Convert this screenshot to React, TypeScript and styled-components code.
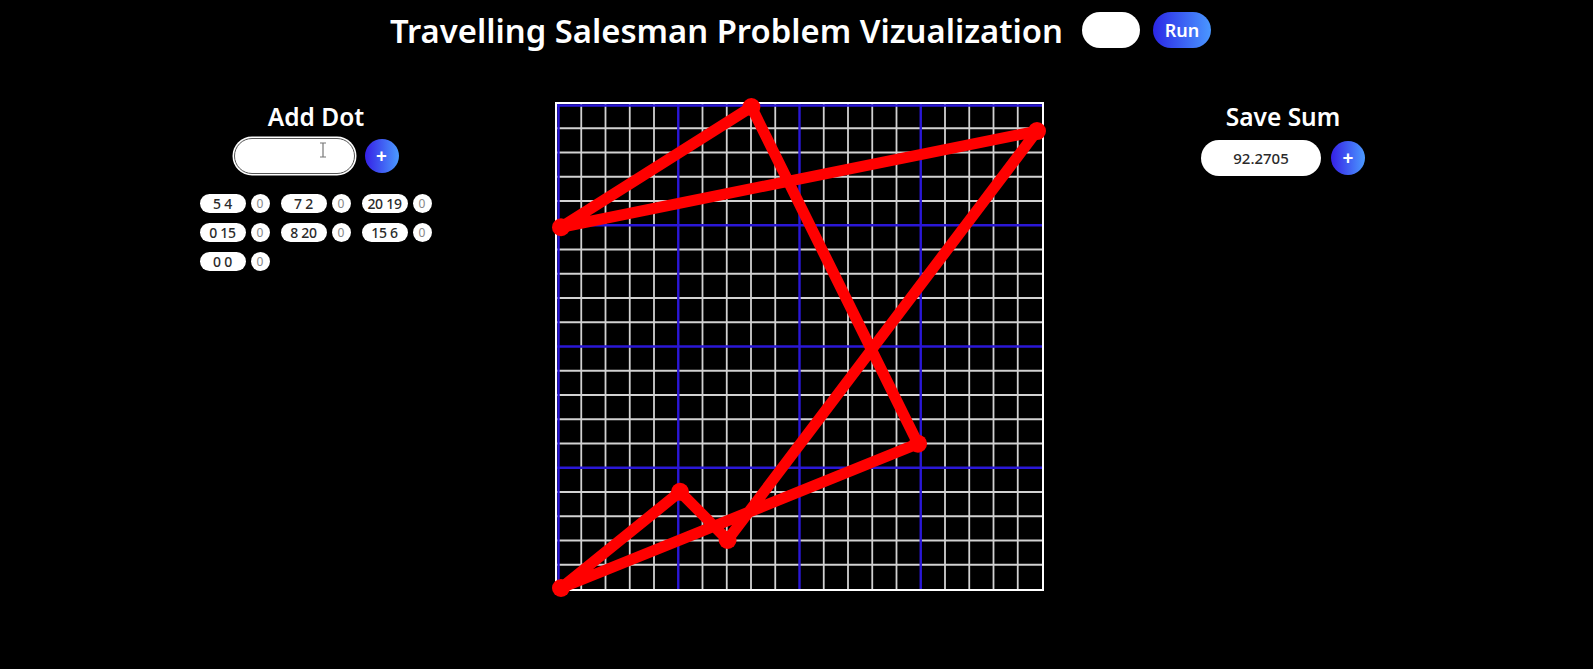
import React from "react";
import styled, { createGlobalStyle } from "styled-components";

const GlobalStyle = createGlobalStyle`
  html, body {
    margin: 0;
    padding: 0;
    background: #000;
    color: #fff;
    font-family: "Noto Sans", "Open Sans", sans-serif;
  }
`;

const CELLS = 20;
const SIZE = 485;
const CELL = SIZE / CELLS;

const dots: [number, number][] = [
  [5, 4],
  [7, 2],
  [20, 19],
  [0, 15],
  [8, 20],
  [15, 6],
  [0, 0],
];

// dots sit a touch inside the board edges
const toPx = ([x, y]: [number, number]) => [
  4 + (x * (SIZE - 9)) / CELLS,
  3 + ((CELLS - y) * (SIZE - 4)) / CELLS,
];

const Page = styled.div`
  width: 1593px;
  min-height: 669px;
  background: #000;
`;

const Header = styled.header`
  height: 60px;
  display: flex;
  align-items: center;
  justify-content: center;
  padding-left: 8px;
`;

const Title = styled.h1`
  margin: 0 19px 0 0;
  font-size: 32.8px;
  font-weight: 600;
  white-space: nowrap;
`;

const HeaderPill = styled.div`
  width: 58px;
  height: 36px;
  border-radius: 18px;
  background: #fff;
  margin-right: 13px;
`;

const RunButton = styled.button`
  width: 58px;
  height: 36px;
  border: none;
  border-radius: 18px;
  background: linear-gradient(90deg, #2b27e6, #4a97ff);
  color: #fff;
  font-family: inherit;
  font-size: 18px;
  font-weight: 600;
  padding: 0;
`;

const Main = styled.main`
  display: flex;
  justify-content: center;
  align-items: flex-start;
  gap: 79px;
  padding-top: 42px;
  padding-left: 6px;
`;

const Column = styled.section`
  width: 320px;
  display: flex;
  flex-direction: column;
  align-items: center;
`;

const ColumnTitle = styled.h2`
  margin: 0;
  font-size: 24.5px;
  line-height: 30px;
  font-weight: 600;
`;

const InputRow = styled.div<{ $top: number }>`
  display: flex;
  align-items: center;
  gap: 10px;
  margin-top: ${(p) => p.$top}px;
  position: relative;
`;

const DotInput = styled.div`
  width: 119px;
  height: 34px;
  border-radius: 20px;
  background: #fff;
  border: 1.5px solid #555;
  box-shadow: 0 0 0 1.5px #fff;
`;

const SumField = styled.div`
  width: 120px;
  height: 36px;
  border-radius: 18px;
  background: #fff;
  color: #2a2a2a;
  display: flex;
  align-items: center;
  justify-content: center;
  font-size: 15px;
  font-weight: 500;
`;

const PlusButton = styled.button`
  width: 34px;
  height: 34px;
  border-radius: 50%;
  border: none;
  padding: 0;
  background: linear-gradient(90deg, #3520e6, #4b9aff);
  color: #fff;
  font-family: inherit;
  font-size: 19px;
  font-weight: 700;
  line-height: 34px;
`;

const Cursor = styled.svg`
  position: absolute;
  left: 85px;
  top: 4px;
`;

const DotList = styled.div`
  width: 233px;
  margin-top: 20px;
  display: flex;
  flex-wrap: wrap;
  column-gap: 11px;
  row-gap: 10px;
`;

const DotItem = styled.div`
  display: flex;
  align-items: center;
  gap: 5px;
`;

const Chip = styled.span`
  width: 46px;
  height: 19px;
  border-radius: 10px;
  background: #fff;
  color: #2a2a2a;
  font-size: 14px;
  font-weight: 500;
  letter-spacing: -0.3px;
  display: flex;
  align-items: center;
  justify-content: center;
`;

const Count = styled.span`
  width: 19px;
  height: 19px;
  border-radius: 50%;
  background: #fff;
  color: #888;
  font-size: 12px;
  display: flex;
  align-items: center;
  justify-content: center;
`;

const Board = styled.div`
  width: ${SIZE}px;
  height: ${SIZE}px;
  border: 2px solid #fff;
  flex-shrink: 0;
`;

const Grid = () => {
  const lines = Array.from({ length: CELLS }, (_, i) => i);
  const pts = dots.map(toPx);
  const poly = [...pts, pts[0]].map((p) => p.join(",")).join(" ");
  const off = (i: number) => i * CELL + (i === 0 ? 1.5 : 0);
  return (
    <svg width={SIZE} height={SIZE} style={{ overflow: "visible", display: "block" }}>
      {lines
        .filter((i) => i % 5 !== 0)
        .map((i) => (
          <g key={i} stroke="#d2d2d2" strokeWidth={1.8}>
            <line x1={off(i)} y1={0} x2={off(i)} y2={SIZE} />
            <line x1={0} y1={off(i)} x2={SIZE} y2={off(i)} />
          </g>
        ))}
      {lines
        .filter((i) => i % 5 === 0)
        .map((i) => (
          <g key={i} stroke="#2a17d6" strokeWidth={2.4}>
            <line x1={off(i)} y1={0} x2={off(i)} y2={SIZE} />
            <line x1={0} y1={off(i)} x2={SIZE} y2={off(i)} />
          </g>
        ))}
      <polyline
        points={poly}
        fill="none"
        stroke="#ff0000"
        strokeWidth={11}
        strokeLinejoin="round"
        strokeLinecap="round"
      />
      {pts.map(([x, y], i) => (
        <circle key={i} cx={x} cy={y} r={9} fill="#ff0000" />
      ))}
    </svg>
  );
};

export default function App() {
  return (
    <Page>
      <GlobalStyle />
      <Header>
        <Title>Travelling Salesman Problem Vizualization</Title>
        <HeaderPill />
        <RunButton>Run</RunButton>
      </Header>
      <Main>
        <Column>
          <ColumnTitle>Add Dot</ColumnTitle>
          <InputRow $top={6}>
            <DotInput />
            <PlusButton>+</PlusButton>
            <Cursor width="8" height="16" viewBox="0 0 8 16">
              <path d="M1 1h6M4 1v14M1 15h6" stroke="#777" strokeWidth="1.2" fill="none" />
            </Cursor>
          </InputRow>
          <DotList>
            {dots.map(([x, y]) => (
              <DotItem key={`${x}-${y}`}>
                <Chip>
                  {x} {y}
                </Chip>
                <Count>0</Count>
              </DotItem>
            ))}
          </DotList>
        </Column>
        <Board>
          <Grid />
        </Board>
        <Column>
          <ColumnTitle>Save Sum</ColumnTitle>
          <InputRow $top={8}>
            <SumField>92.2705</SumField>
            <PlusButton>+</PlusButton>
          </InputRow>
        </Column>
      </Main>
    </Page>
  );
}
